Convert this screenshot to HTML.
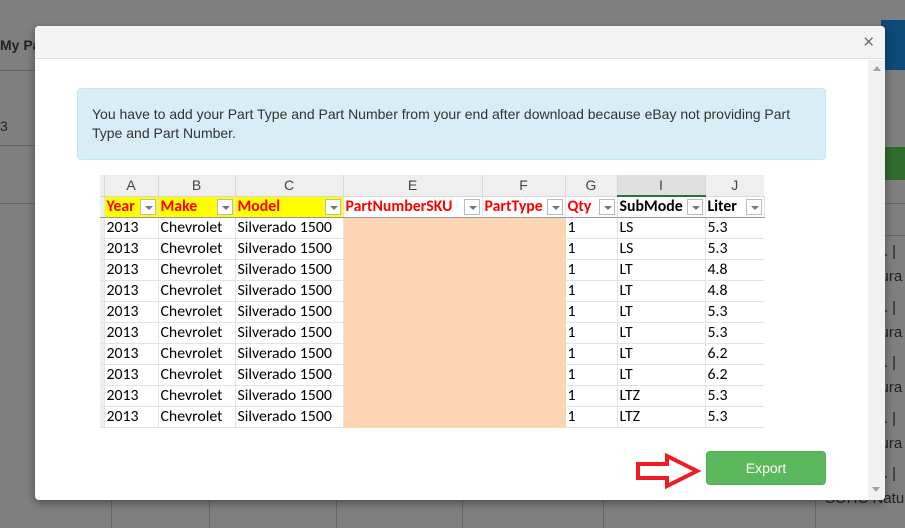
<!DOCTYPE html>
<html><head><meta charset="utf-8"><style>
*{margin:0;padding:0;box-sizing:border-box}
body{width:905px;height:528px;overflow:hidden;background:#7f7f7f;font-family:"Liberation Sans",sans-serif;position:relative}
.abs{position:absolute;white-space:nowrap}
.modal{left:35px;top:26px;width:850px;height:474px;background:#fff;border-radius:4px;box-shadow:0 3px 9px rgba(0,0,0,.4);overflow:hidden}
.mh{position:absolute;left:0;top:0;width:850px;height:33px;background:#f4f4f4;border-bottom:1px solid #ddd}
.x{position:absolute;right:10px;top:7px;font-size:15px;color:#777}
.sb{position:absolute;left:833px;top:34px;width:17px;height:440px;background:#f1f1f1}
.alert{left:77px;top:88px;width:749px;height:72px;background:#d9edf7;border:1px solid #bce8f1;border-radius:4px;color:#333;font-size:14px;line-height:19px;padding:16px 14px;white-space:normal}
table{position:absolute;left:100px;top:175px;border-collapse:collapse;font-family:"Carlito","Liberation Sans",sans-serif;font-size:15.8px;table-layout:fixed}
td{height:21px;padding:0 2px;border-right:1px solid #e3e3e3;border-bottom:1px solid #e3e3e3;white-space:nowrap;overflow:hidden;color:#000;line-height:20px}
tr.cl td{background:#efefef;text-align:center;color:#444;border-color:#d8d8d8;font-family:"Liberation Sans",sans-serif;font-size:14px}
tr.hd td{font-weight:bold;color:#f00;position:relative;border-bottom:1px solid #999}
tr.hd td.y{background:#ff0}
tr.hd td.k{color:#000}
.dd{position:absolute;right:2px;top:2px;width:16px;height:16px;border:1px solid #bbb;background:#fff}
.dd:after{content:"";position:absolute;left:4px;top:6px;border:4px solid transparent;border-top:4px solid #777}
td.o{background:#fcd5b4;border-color:#fcd5b4}
td.rn{width:4px;padding:0;background:#efefef}
td.last{border-right:none}
.btn{left:706px;top:451px;width:120px;height:34px;background:#5cb85c;border:1px solid #4cae4c;border-radius:4px;color:#fff;font-size:14px;text-align:center;line-height:32px}
.rt{left:868px;font-size:15px;color:#222}
</style></head><body>
<div class="abs" style="left:0;top:37px;font-weight:bold;font-size:14px;color:#222">My Pa</div>
<div class="abs" style="left:0;top:118px;font-size:14px;color:#222">3</div>
<div class="abs" style="left:0;top:70px;width:35px;border-top:1px solid #666"></div>
<div class="abs" style="left:0;top:145px;width:35px;border-top:1px solid #666"></div>
<div class="abs" style="left:0;top:203px;width:35px;border-top:1px solid #666"></div>
<div class="abs" style="left:881px;top:20px;width:24px;height:50px;background:#0d4a78"></div>
<div class="abs" style="left:885px;top:147px;width:20px;height:33px;background:#2f6b2f"></div>
<div class="abs" style="left:885px;top:203px;width:20px;border-top:1px solid #666"></div>
<div class="abs" style="left:885px;top:235px;width:20px;border-top:1px solid #666"></div>
<div class="abs rt" style="top:243px">cu. |</div><div class="abs rt" style="top:268px">atura</div>
<div class="abs rt" style="top:299px">cu. |</div><div class="abs rt" style="top:324px">atura</div>
<div class="abs rt" style="top:354px">cu. |</div><div class="abs rt" style="top:379px">atura</div>
<div class="abs rt" style="top:410px">cu. |</div><div class="abs rt" style="top:435px">atura</div>
<div class="abs rt" style="top:465px">cu. |</div>
<div class="abs" style="left:825px;top:490px;font-size:15px;color:#222">SOHC Natura</div>
<div class="abs" style="left:111px;top:500px;height:28px;border-left:1px solid #666"></div>
<div class="abs" style="left:209px;top:500px;height:28px;border-left:1px solid #666"></div>
<div class="abs" style="left:336px;top:500px;height:28px;border-left:1px solid #666"></div>
<div class="abs" style="left:462px;top:500px;height:28px;border-left:1px solid #666"></div>
<div class="abs" style="left:603px;top:500px;height:28px;border-left:1px solid #666"></div>
<div class="abs" style="left:815px;top:470px;height:58px;border-left:1px solid #666"></div>

<div class="abs modal">
<div class="mh"><span class="x">✕</span></div>
<div class="sb"><div style="margin:6px auto 0;width:0;border:4px solid transparent;border-bottom:5px solid #a3a3a3;border-top:0"></div><div style="position:absolute;bottom:8px;left:4px;border:4px solid transparent;border-top:5px solid #a3a3a3;border-bottom:0"></div></div>
</div>
<div class="abs alert">You have to add your Part Type and Part Number from your end after download because eBay not providing Part Type and Part Number.</div>
<table>
<colgroup><col style="width:4px"><col style="width:54px"><col style="width:77px"><col style="width:108px"><col style="width:139px"><col style="width:83px"><col style="width:52px"><col style="width:88px"><col style="width:59px"></colgroup>
<tr class="cl"><td class="rn"></td><td>A</td><td>B</td><td>C</td><td>E</td><td>F</td><td>G</td><td style="background:#e0e0e0;border-bottom:2px solid #217346">I</td><td class="last">J</td></tr>
<tr class="hd"><td class="rn"></td><td class="y">Year<span class="dd"></span></td><td class="y">Make<span class="dd"></span></td><td class="y">Model<span class="dd"></span></td><td>PartNumberSKU<span class="dd"></span></td><td>PartType<span class="dd"></span></td><td>Qty<span class="dd"></span></td><td class="k">SubMode<span class="dd"></span></td><td class="k">Liter<span class="dd"></span></td></tr>
<tr><td class="rn"></td><td>2013</td><td>Chevrolet</td><td>Silverado 1500</td><td class="o"></td><td class="o"></td><td>1</td><td>LS</td><td class="last">5.3</td></tr>
<tr><td class="rn"></td><td>2013</td><td>Chevrolet</td><td>Silverado 1500</td><td class="o"></td><td class="o"></td><td>1</td><td>LS</td><td class="last">5.3</td></tr>
<tr><td class="rn"></td><td>2013</td><td>Chevrolet</td><td>Silverado 1500</td><td class="o"></td><td class="o"></td><td>1</td><td>LT</td><td class="last">4.8</td></tr>
<tr><td class="rn"></td><td>2013</td><td>Chevrolet</td><td>Silverado 1500</td><td class="o"></td><td class="o"></td><td>1</td><td>LT</td><td class="last">4.8</td></tr>
<tr><td class="rn"></td><td>2013</td><td>Chevrolet</td><td>Silverado 1500</td><td class="o"></td><td class="o"></td><td>1</td><td>LT</td><td class="last">5.3</td></tr>
<tr><td class="rn"></td><td>2013</td><td>Chevrolet</td><td>Silverado 1500</td><td class="o"></td><td class="o"></td><td>1</td><td>LT</td><td class="last">5.3</td></tr>
<tr><td class="rn"></td><td>2013</td><td>Chevrolet</td><td>Silverado 1500</td><td class="o"></td><td class="o"></td><td>1</td><td>LT</td><td class="last">6.2</td></tr>
<tr><td class="rn"></td><td>2013</td><td>Chevrolet</td><td>Silverado 1500</td><td class="o"></td><td class="o"></td><td>1</td><td>LT</td><td class="last">6.2</td></tr>
<tr><td class="rn"></td><td>2013</td><td>Chevrolet</td><td>Silverado 1500</td><td class="o"></td><td class="o"></td><td>1</td><td>LTZ</td><td class="last">5.3</td></tr>
<tr><td class="rn"></td><td>2013</td><td>Chevrolet</td><td>Silverado 1500</td><td class="o"></td><td class="o"></td><td>1</td><td>LTZ</td><td class="last">5.3</td></tr>
</table>
<svg class="abs" style="left:630px;top:450px" width="75" height="42"><polygon points="8,14 37,14 37,6 67,21 37,36 37,28 8,28" fill="none" stroke="#ee1c24" stroke-width="4" stroke-linejoin="miter"/></svg>
<div class="abs btn">Export</div>
</body></html>
